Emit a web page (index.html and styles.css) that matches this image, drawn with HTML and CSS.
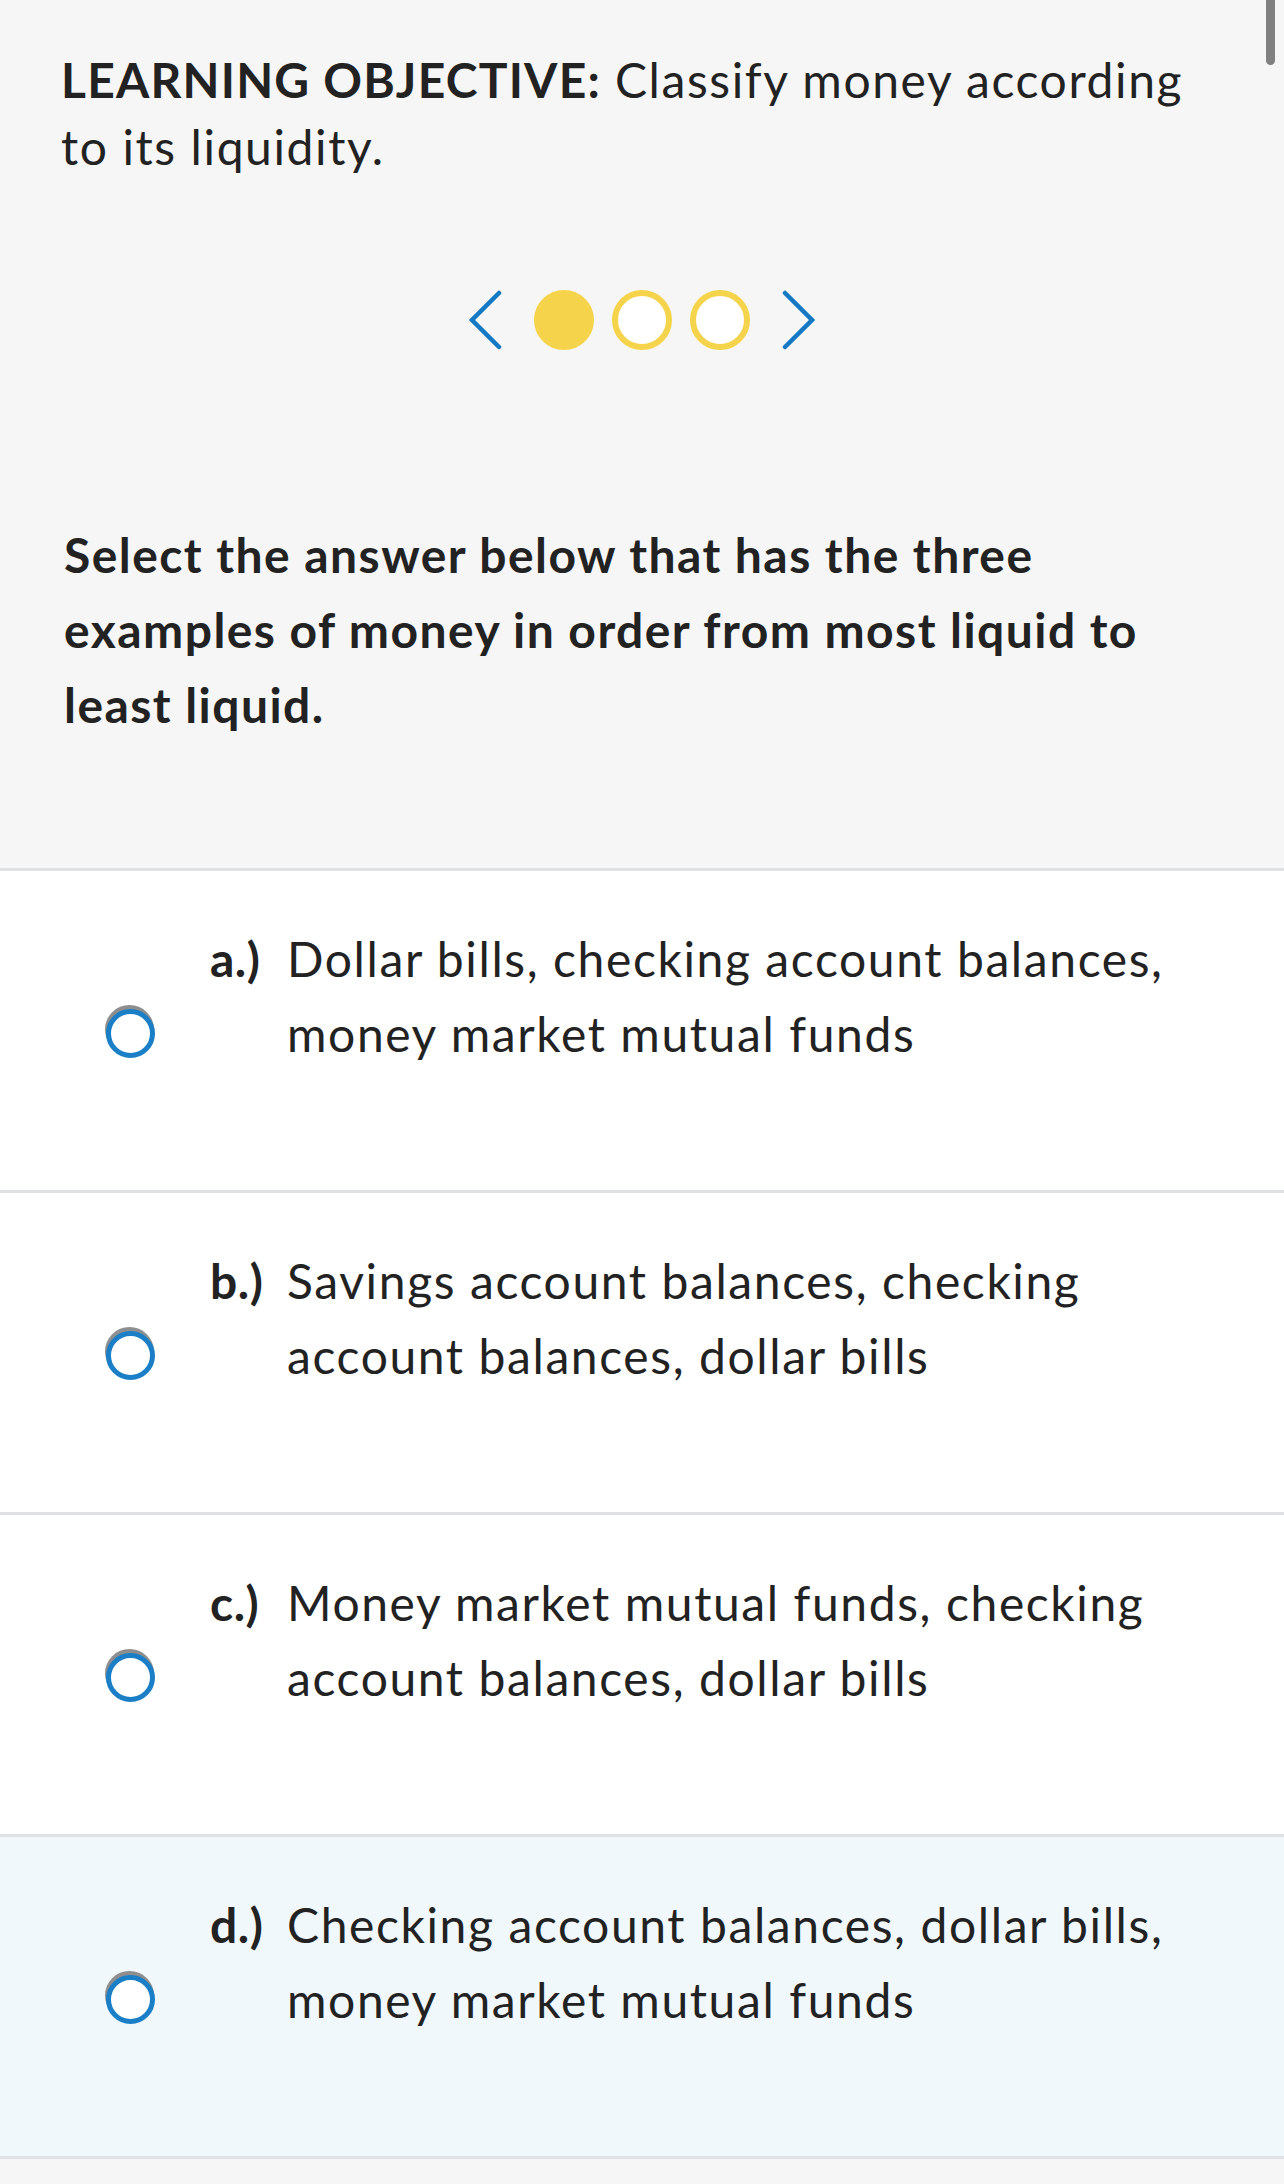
FILE: index.html
```html
<!DOCTYPE html>
<html>
<head>
<meta charset="utf-8">
<link rel="stylesheet" href="styles.css">
</head>
<body>
<div class="scrollbar"></div>
<section class="header">
  <p class="objective"><b>LEARNING OBJECTIVE:</b> Classify money according to its liquidity.</p>
  <nav class="pager">
    <svg class="chev" width="34" height="60" viewBox="0 0 34 60"><polyline points="30,3 3,30 30,57" fill="none" stroke="#1578c2" stroke-width="4.5" stroke-linecap="round" stroke-linejoin="miter"/></svg>
    <span class="dot filled"></span>
    <span class="dot"></span>
    <span class="dot"></span>
    <svg class="chev" width="34" height="60" viewBox="0 0 34 60"><polyline points="4,3 31,30 4,57" fill="none" stroke="#1578c2" stroke-width="4.5" stroke-linecap="round" stroke-linejoin="miter"/></svg>
  </nav>
  <p class="question">Select the answer below that has the three examples of money in order from most liquid to least liquid.</p>
</section>
<section class="options">
  <div class="option">
    <span class="radio"></span>
    <div class="content"><span class="label">a.)</span><span class="text">Dollar bills, checking account balances, money market mutual funds</span></div>
  </div>
  <div class="option">
    <span class="radio"></span>
    <div class="content"><span class="label">b.)</span><span class="text">Savings account balances, checking account balances, dollar bills</span></div>
  </div>
  <div class="option">
    <span class="radio"></span>
    <div class="content"><span class="label">c.)</span><span class="text">Money market mutual funds, checking account balances, dollar bills</span></div>
  </div>
  <div class="option hover">
    <span class="radio"></span>
    <div class="content"><span class="label">d.)</span><span class="text">Checking account balances, dollar bills, money market mutual funds</span></div>
  </div>
</section>
<div class="footer"></div>
</body>
</html>
```
FILE: styles.css
```css
html, body {
  margin: 0;
  padding: 0;
}
body {
  background: #f6f6f6;
  font-family: Lato, "Liberation Sans", sans-serif;
  color: #222222;
  width: 1284px;
  height: 2184px;
  overflow: hidden;
  position: relative;
}
.scrollbar {
  position: absolute;
  top: -10px;
  right: 9px;
  width: 9px;
  height: 75px;
  border-radius: 5px;
  background: #808080;
}
.header {
  padding: 46px 40px 126px 61px;
}
.objective {
  margin: 0;
  font-size: 48px;
  line-height: 67px;
  letter-spacing: 1.6px;
}
.objective b {
  font-weight: 700;
  letter-spacing: 1.2px;
}
.pager {
  display: flex;
  justify-content: center;
  align-items: center;
  margin: 110px 21px 0 0;
  height: 60px;
}
.chev {
  display: block;
}
.pager .chev:first-child {
  margin-right: 22px;
}
.pager .chev:last-child {
  margin-left: 22px;
}
.dot {
  width: 60px;
  height: 60px;
  box-sizing: border-box;
  border-radius: 50%;
  border: 6px solid #f5d44b;
  background: #ffffff;
  margin: 0 9px;
}
.dot.filled {
  background: #f5d44b;
}
.question {
  margin: 167px 0 0 3px;
  font-size: 48px;
  line-height: 75px;
  font-weight: 700;
  letter-spacing: 1.45px;
  max-width: 1120px;
}
.options {
  border-bottom: 3px solid #dfe1e4;
}
.option {
  display: flex;
  align-items: center;
  border-top: 3px solid #dfe1e4;
  background: #ffffff;
  box-sizing: border-box;
  height: 322px;
}
.option.hover {
  background: #f1f8fc;
}
.radio {
  flex: none;
  width: 49px;
  height: 49px;
  box-sizing: border-box;
  border-radius: 50%;
  border: 5px solid #1a7fc6;
  background: #ffffff;
  box-shadow: -1px -4px 0 0 #8e8e8e;
  margin-left: 106px;
  margin-top: 6px;
}
.content {
  align-self: flex-start;
  display: flex;
  margin-top: 50px;
  margin-left: 55px;
  font-size: 48px;
  line-height: 75px;
  letter-spacing: 1.6px;
}
.label {
  flex: none;
  width: 77px;
  font-weight: 700;
  letter-spacing: 0.5px;
}
.text {
  width: 900px;
}
.footer {
  height: 30px;
}
```
